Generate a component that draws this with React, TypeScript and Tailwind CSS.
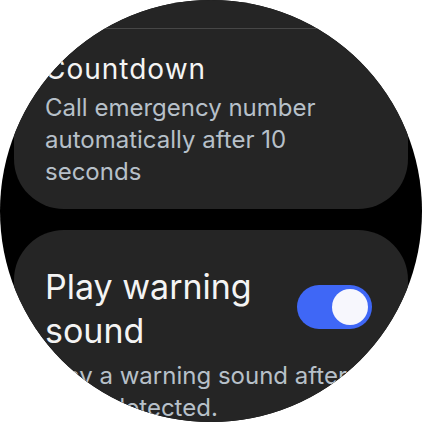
export default function App() {
  return (
    <div className="w-[422px] h-[422px] bg-white">
      <div className="w-[422px] h-[422px] rounded-full overflow-hidden bg-black font-['Inter','Liberation_Sans',sans-serif]">
        <div className="flex flex-col gap-[21px] px-[14px]">
          {/* Countdown card (top part scrolled away) */}
          <div className="bg-[#252525] rounded-b-[50px] pt-[28px] pb-[21px]">
            <div className="h-px bg-[#474747] mx-[24px]" />
            <div className="pl-[31px] pr-[31px] pt-[23px]">
              <div className="text-[28px] leading-[34px] text-[#f4f4f4] tracking-[1px]">Countdown</div>
              <div className="mt-[6px] text-[24px] leading-[32px] text-[#b7c0c9]">
                Call emergency number
                <br />
                automatically after 10
                <br />
                seconds
              </div>
            </div>
          </div>

          {/* Play warning sound card */}
          <div className="bg-[#252525] rounded-t-[50px] pt-[35px] pl-[31px] pr-[36px] pb-[40px]">
            <div className="flex items-start justify-between">
              <div className="text-[34px] leading-[44px] text-[#f4f4f4]">
                Play warning
                <br />
                sound
              </div>
              <div className="mt-[20px] w-[75px] h-[44px] rounded-full bg-[#3f67f6] flex items-center justify-end pr-[4px] shrink-0">
                <div className="w-[36px] h-[36px] rounded-full bg-[#f7f7fd]" />
              </div>
            </div>
            <div className="mt-[7px] text-[24px] leading-[32px] text-[#b7c0c9] whitespace-nowrap">
              Play a warning sound after a
              <br />
              fall is detected.
            </div>
          </div>
        </div>
      </div>
    </div>
  );
}
